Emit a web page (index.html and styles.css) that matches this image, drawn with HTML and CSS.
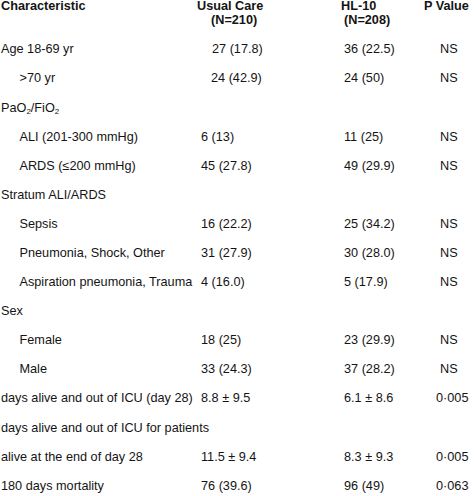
FILE: index.html
```html
<!DOCTYPE html>
<html lang="en">
<head>
<meta charset="utf-8">
<title>Baseline characteristics</title>
<link rel="stylesheet" href="styles.css">
</head>
<body>
<div class="tbl">
  <div class="hd c1"><span class="hl">Characteristic</span></div>
  <div class="hd c2"><span class="hl uc1">Usual Care</span><span class="hl uc2">(N=210)</span></div>
  <div class="hd c3"><span class="hl hl1">HL-10</span><span class="hl hl2">(N=208)</span></div>
  <div class="hd c4"><span class="hl pv">P Value</span></div>

  <div class="cell">Age 18-69 yr</div><div class="cell shift1">27 (17.8)</div><div class="cell">36 (22.5)</div><div class="cell ns">NS</div>
  <div class="cell sub">&gt;70 yr</div><div class="cell shift2">24 (42.9)</div><div class="cell">24 (50)</div><div class="cell ns">NS</div>
  <div class="cell">PaO<sub class="s">2</sub>/FiO<sub class="s">2</sub></div><div class="cell"></div><div class="cell"></div><div class="cell"></div>
  <div class="cell sub">ALI (201-300 mmHg)</div><div class="cell">6 (13)</div><div class="cell">11 (25)</div><div class="cell ns">NS</div>
  <div class="cell sub">ARDS (≤200 mmHg)</div><div class="cell">45 (27.8)</div><div class="cell">49 (29.9)</div><div class="cell ns">NS</div>
  <div class="cell">Stratum ALI/ARDS</div><div class="cell"></div><div class="cell"></div><div class="cell"></div>
  <div class="cell sub">Sepsis</div><div class="cell">16 (22.2)</div><div class="cell">25 (34.2)</div><div class="cell ns">NS</div>
  <div class="cell sub">Pneumonia, Shock, Other</div><div class="cell">31 (27.9)</div><div class="cell">30 (28.0)</div><div class="cell ns">NS</div>
  <div class="cell sub">Aspiration pneumonia, Trauma</div><div class="cell">4 (16.0)</div><div class="cell">5 (17.9)</div><div class="cell ns">NS</div>
  <div class="cell">Sex</div><div class="cell"></div><div class="cell"></div><div class="cell"></div>
  <div class="cell sub">Female</div><div class="cell">18 (25)</div><div class="cell">23 (29.9)</div><div class="cell ns">NS</div>
  <div class="cell sub">Male</div><div class="cell">33 (24.3)</div><div class="cell">37 (28.2)</div><div class="cell ns">NS</div>
  <div class="cell">days alive and out of ICU (day 28)</div><div class="cell">8.8 ± 9.5</div><div class="cell">6.1 ± 8.6</div><div class="cell">0·005</div>
  <div class="cell wide">days alive and out of ICU for patients</div><div class="cell"></div><div class="cell"></div>
  <div class="cell">alive at the end of day 28</div><div class="cell">11.5 ± 9.4</div><div class="cell">8.3 ± 9.3</div><div class="cell">0·005</div>
  <div class="cell">180 days mortality</div><div class="cell">76 (39.6)</div><div class="cell">96 (49)</div><div class="cell">0·063</div>
</div>
</body>
</html>
```

FILE: styles.css
```css
html, body {
  margin: 0;
  padding: 0;
  background: #ffffff;
}

body {
  width: 474px;
  height: 496px;
  overflow: hidden;
  font-family: "Liberation Sans", Arial, sans-serif;
  font-size: 12.7px;
  color: #141414;
}

.tbl {
  display: grid;
  grid-template-columns: 200px 143px 92px 1fr;
  grid-template-rows: 36.75px repeat(16, 29.1px);
  margin-top: -1.4px;
  padding-left: 1px;
}

.hd {
  display: flex;
  flex-direction: column;
  font-weight: bold;
  line-height: 14px;
  white-space: nowrap;
}

.hl {
  display: block;
}

.uc1 { margin-left: -4px; }
.uc2 { margin-left: 10px; }
.hl1 { margin-left: -3px; }
.hl2 { margin-left: 0; }
.pv { margin-left: -12px; }

.cell {
  line-height: 29.1px;
  white-space: nowrap;
}

.sub {
  padding-left: 18.5px;
}

.shift1 { padding-left: 11px; }
.shift2 { padding-left: 10px; }

.ns {
  padding-left: 4px;
}

.wide {
  grid-column: 1 / 3;
}

.s {
  font-size: 8px;
  vertical-align: -2px;
  line-height: 0;
}
```
